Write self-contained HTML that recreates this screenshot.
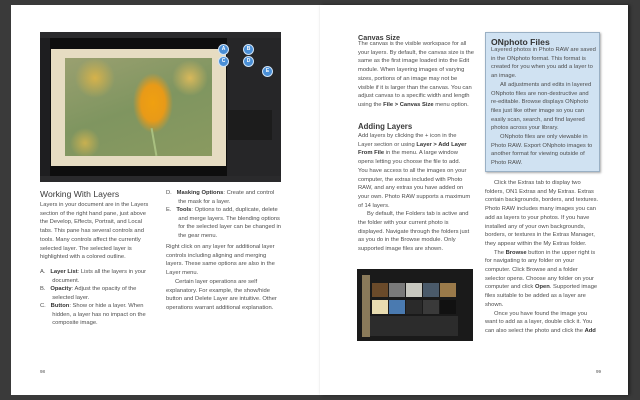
<!DOCTYPE html>
<html><head><meta charset="utf-8"><style>
*{margin:0;padding:0;box-sizing:border-box}
body{width:640px;height:400px;background:#3a3a3a;position:relative;overflow:hidden;font-family:"Liberation Sans",sans-serif;color:#4a4a4a}
.pg{position:absolute;background:#fff}
.t{position:absolute;font-size:5.8px;line-height:8.7px;white-space:nowrap;color:#4d4d4d}
.t b{color:#333}
.h{position:absolute;white-space:nowrap;color:#3a3a3a}
.a{position:absolute}
.c{position:absolute;width:11px;height:11px;border-radius:50%;background:#4a8fd6;border:1px solid #cfe3f7;color:#fff;font-size:5px;font-weight:bold;text-align:center;line-height:9px}
.ind{display:inline-block;width:9px}
</style></head><body>
<div class="pg" style="left:11px;top:5px;width:310px;height:390px"></div>
<div class="pg" style="left:320px;top:5px;width:308px;height:390px;box-shadow:2px 0 3px #222"></div>

<div class="a" style="left:40px;top:32px;width:241px;height:150px;background:#1e1e20"></div>
<div class="a" style="left:40px;top:32px;width:241px;height:6px;background:#2b2b2d"></div>
<div class="a" style="left:50px;top:38px;width:177px;height:138px;background:#0e0e0e"></div>
<div class="a" style="left:51px;top:49px;width:175px;height:117px;background:#e6dcc2"></div>
<div class="a" style="left:65px;top:58px;width:147px;height:98px;background:radial-gradient(ellipse 20px 30px at 88px 45px,#f0a010 0,#e89a18 60%,rgba(0,0,0,0) 100%),radial-gradient(circle at 30px 20px,#d6b24a 0,rgba(0,0,0,0) 20px),radial-gradient(circle at 125px 20px,#d8b85a 0,rgba(0,0,0,0) 18px),radial-gradient(circle at 20px 85px,#c8b050 0,rgba(0,0,0,0) 15px),linear-gradient(160deg,#9aa070,#7f9560 50%,#8a9a60)"></div>
<div class="a" style="left:153px;top:128px;width:2px;height:28px;background:#a9c080;transform:rotate(-10deg)"></div>
<div class="a" style="left:227px;top:38px;width:54px;height:144px;background:#262628"></div>
<div class="a" style="left:228px;top:110px;width:44px;height:30px;background:#1c1c1c"></div>
<div class="a" style="left:40px;top:176px;width:241px;height:6px;background:#2a2a2c"></div>
<div class="c" style="left:218px;top:44px">A</div>
<div class="c" style="left:243px;top:44px">B</div>
<div class="c" style="left:218px;top:56px">C</div>
<div class="c" style="left:243px;top:56px">D</div>
<div class="c" style="left:262px;top:66px">E</div>

<div class="h" style="left:40px;top:189px;font-size:8.6px">Working With Layers</div>
<div class="t" style="left:40px;top:201px">Layers in your document are in the Layers<br>section of the right hand pane, just above<br>the Develop, Effects, Portrait, and Local<br>tabs. This pane has several controls and<br>tools. Many controls affect the currently<br>selected layer. The selected layer is<br>highlighted with a colored outline.</div>
<div class="t" style="left:40px;top:268px">A.&nbsp;&nbsp; <b>Layer List</b>: Lists all the layers in your<br><span class="ind"></span>&nbsp;&nbsp;document.</div>
<div class="t" style="left:40px;top:285px">B.&nbsp;&nbsp; <b>Opacity</b>: Adjust the opacity of the<br><span class="ind"></span>&nbsp;&nbsp;selected layer.</div>
<div class="t" style="left:40px;top:302px">C.&nbsp;&nbsp; <b>Button</b>: Show or hide a layer. When<br><span class="ind"></span>&nbsp;&nbsp;hidden, a layer has no impact on the<br><span class="ind"></span>&nbsp;&nbsp;composite image.</div>
<div class="t" style="left:166px;top:189px">D.&nbsp;&nbsp; <b>Masking Options</b>: Create and control<br><span class="ind"></span>&nbsp;&nbsp;the mask for a layer.</div>
<div class="t" style="left:166px;top:206px">E.&nbsp;&nbsp; <b>Tools</b>: Options to add, duplicate, delete<br><span class="ind"></span>&nbsp;&nbsp;and merge layers. The blending options<br><span class="ind"></span>&nbsp;&nbsp;for the selected layer can be changed in<br><span class="ind"></span>&nbsp;&nbsp;the gear menu.</div>
<div class="t" style="left:166px;top:243px">Right click on any layer for additional layer<br>controls including aligning and merging<br>layers. These same options are also in the<br>Layer menu.<br><span class="ind"></span>Certain layer operations are self<br>explanatory. For example, the show/hide<br>button and Delete Layer are intuitive. Other<br>operations warrant additional explanation.</div>
<div class="t" style="left:40px;top:368px;font-size:4.5px">98</div>

<div class="h" style="left:358px;top:33px;font-size:7.2px;font-weight:bold">Canvas Size</div>
<div class="t" style="left:358px;top:40px">The canvas is the visible workspace for all<br>your layers. By default, the canvas size is the<br>same as the first image loaded into the Edit<br>module. When layering images of varying<br>sizes, portions of an image may not be<br>visible if it is larger than the canvas. You can<br>adjust canvas to a specific width and length<br>using the <b>File &gt; Canvas Size</b> menu option.</div>
<div class="h" style="left:358px;top:122px;font-size:7.8px;font-weight:bold">Adding Layers</div>
<div class="t" style="left:358px;top:132px">Add layers by clicking the + icon in the<br>Layer section or using <b>Layer &gt; Add Layer</b><br><b>From File</b> in the menu. A large window<br>opens letting you choose the file to add.<br>You have access to all the images on your<br>computer, the extras included with Photo<br>RAW, and any extras you have added on<br>your own. Photo RAW supports a maximum<br>of 14 layers.<br><span class="ind"></span>By default, the Folders tab is active and<br>the folder with your current photo is<br>displayed. Navigate through the folders just<br>as you do in the Browse module. Only<br>supported image files are shown.</div>

<div class="a" style="left:357px;top:269px;width:116px;height:72px;background:#1a1a1a"></div>
<div class="a" style="left:362px;top:275px;width:8px;height:62px;background:#8a7a5a"></div>
<div class="a" style="left:372px;top:283px;width:16px;height:14px;background:#6a4a2a"></div>
<div class="a" style="left:389px;top:283px;width:16px;height:14px;background:#7a7a7a"></div>
<div class="a" style="left:406px;top:283px;width:16px;height:14px;background:#c8c8c0"></div>
<div class="a" style="left:423px;top:283px;width:16px;height:14px;background:#4a5a6a"></div>
<div class="a" style="left:440px;top:283px;width:16px;height:14px;background:#9a7a4a"></div>
<div class="a" style="left:372px;top:300px;width:16px;height:14px;background:#e8dcb0"></div>
<div class="a" style="left:389px;top:300px;width:16px;height:14px;background:#4a7ab0"></div>
<div class="a" style="left:406px;top:300px;width:16px;height:14px;background:#2a2a2a"></div>
<div class="a" style="left:423px;top:300px;width:16px;height:14px;background:#3a3a3a"></div>
<div class="a" style="left:440px;top:300px;width:16px;height:14px;background:#111"></div>
<div class="a" style="left:370px;top:316px;width:88px;height:20px;background:#2c2c2c"></div>

<div class="a" style="left:485px;top:32px;width:115px;height:140px;background:#d0e2f2;border:1px solid #9ab0c4;box-shadow:1px 1px 2px #aaa"></div>
<div class="h" style="left:491px;top:37px;font-size:8.6px;font-weight:bold;color:#333">ONphoto Files</div>
<div class="t" style="left:491px;top:46px">Layered photos in Photo RAW are saved<br>in the ONphoto format. This format is<br>created for you when you add a layer to<br>an image.<br><span class="ind"></span>All adjustments and edits in layered<br>ONphoto files are non-destructive and<br>re-editable. Browse displays ONphoto<br>files just like other image so you can<br>easily scan, search, and find layered<br>photos across your library.<br><span class="ind"></span>ONphoto files are only viewable in<br>Photo RAW. Export ONphoto images to<br>another format for viewing outside of<br>Photo RAW.</div>

<div class="t" style="left:485px;top:179px"><span class="ind"></span>Click the Extras tab to display two<br>folders, ON1 Extras and My Extras. Extras<br>contain backgrounds, borders, and textures.<br>Photo RAW includes many images you can<br>add as layers to your photos. If you have<br>installed any of your own backgrounds,<br>borders, or textures in the Extras Manager,<br>they appear within the My Extras folder.<br><span class="ind"></span>The <b>Browse</b> button in the upper right is<br>for navigating to any folder on your<br>computer. Click Browse and a folder<br>selector opens. Choose any folder on your<br>computer and click <b>Open</b>. Supported image<br>files suitable to be added as a layer are<br>shown.<br><span class="ind"></span>Once you have found the image you<br>want to add as a layer, double click it. You<br>can also select the photo and click the <b>Add</b></div>
<div class="t" style="left:596px;top:368px;font-size:4.5px">99</div>
</body></html>
